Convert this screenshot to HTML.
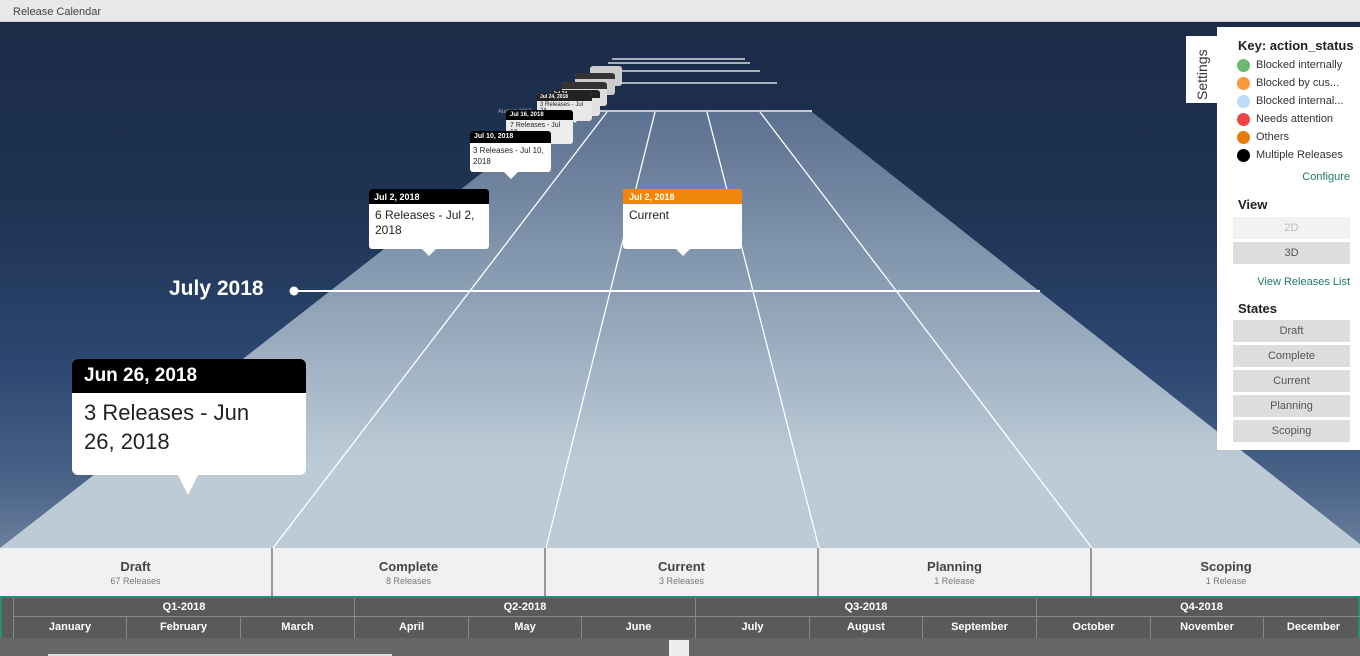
<!DOCTYPE html>
<html><head><meta charset="utf-8">
<style>
*{margin:0;padding:0;box-sizing:border-box}
body{width:1360px;height:656px;overflow:hidden;font-family:"Liberation Sans",sans-serif;background:#1d2d4b;position:relative}
#hdr{position:absolute;left:0;top:0;width:1360px;height:22px;background:#e8e8e8;border-bottom:1px solid #ccc;font-size:11px;color:#444;padding:6px 0 0 13px}
#sky{position:absolute;left:0;top:22px;width:1360px;height:526px;background:linear-gradient(180deg,#1b2b48 0%,#1f3353 35%,#2c4770 65%,#4b6488 88%,#6a7f9c 100%)}
.card{position:absolute;background:#fff;border-radius:3px;color:#222}
.card .h{background:#000;color:#fff;font-weight:bold;border-radius:3px 3px 0 0}
.card:after{content:"";position:absolute;left:50%;bottom:-7px;margin-left:-7px;border-left:7px solid transparent;border-right:7px solid transparent;border-top:7px solid #fff}
.card.big:after{bottom:-20px;border-left:10px solid transparent;border-right:10px solid transparent;border-top:20px solid #fff;left:188px;margin-left:-82px}
#panel{position:absolute;left:1217px;top:27px;width:143px;height:423px;background:#fff}
#tab{position:absolute;left:1186px;top:36px;width:32px;height:67px;background:#fff}
#tab span{position:absolute;left:-14px;top:26px;transform:rotate(-90deg);font-size:14px;color:#333;width:60px}
.k{font-size:11px;color:#333;height:18px;display:flex;align-items:center;padding-left:20px}
.k i{width:13px;height:13px;border-radius:50%;display:inline-block;margin-right:6px}
.btn{width:117px;margin-left:16px;height:22px;background:#ddd;color:#555;font-size:11px;text-align:center;line-height:22px;margin-bottom:3px}
.lane{position:absolute;top:548px;height:48px;background:#f1f1f1;text-align:center;border-right:2px solid #999}
.lane b{display:block;font-size:13px;color:#444;margin-top:11px;font-weight:bold}
.lane s{display:block;text-decoration:none;font-size:9px;color:#777;margin-top:2px}
#tl{position:absolute;left:0;top:596px;width:1360px;height:60px;background:#5a5a5a;border-top:2px solid #2a8a78;border-left:2px solid #2a8a78;border-right:2px solid #2a8a78}
.q,.m{position:absolute;color:#fff;font-size:11px;font-weight:bold;text-align:center;border-left:1px solid #888}
.q{top:0;height:19px;line-height:19px;border-bottom:1px solid #888}
.m{top:19px;height:21px;line-height:21px}
</style></head><body>
<div id="hdr">Release Calendar</div>
<div id="sky"></div>
<svg style="position:absolute;left:0;top:0" width="1360" height="656">
<defs><linearGradient id="rd" x1="0" y1="0" x2="0" y2="1">
<stop offset="0" stop-color="#5c7090"/><stop offset="0.4" stop-color="#8a9eb4"/><stop offset="0.8" stop-color="#bccbd6"/><stop offset="1" stop-color="#bccbd6"/></linearGradient></defs>
<polygon points="560,112 812,112 1365,548 0,548" fill="url(#rd)"/>
<g stroke="#fff" stroke-width="1.3" fill="none">
<line x1="607" y1="112" x2="273" y2="548"/>
<line x1="655" y1="112" x2="546" y2="548"/>
<line x1="707" y1="112" x2="819" y2="548"/>
<line x1="760" y1="112" x2="1092" y2="548"/>
<line x1="590" y1="111" x2="812" y2="111" stroke-width="1.5"/>
<line x1="600" y1="83" x2="777" y2="83"/>
<line x1="605" y1="71" x2="760" y2="71"/>
<line x1="608" y1="63" x2="750" y2="63"/>
<line x1="612" y1="59" x2="745" y2="59"/>
<line x1="294" y1="291" x2="1040" y2="291" stroke-width="2"/>
</g>
<circle cx="294" cy="291" r="4.5" fill="#fff"/>
<text x="169" y="295" fill="#fff" font-size="21" font-weight="bold" font-family="Liberation Sans">July 2018</text>
<text x="498" y="113" fill="#aab" font-size="6" font-family="Liberation Sans">August 2018</text>
</svg>
<div class="card" style="left:590px;top:66px;width:32px;height:20px;background:#ccc"></div>
<div class="card" style="left:575px;top:73px;width:40px;height:22px;background:#ccc"><div class="h" style="height:6px;background:#333"></div></div>
<div class="card" style="left:562px;top:82px;width:45px;height:24px;background:#ddd"><div class="h" style="height:7px;background:#333"></div></div>
<div class="card" style="left:550px;top:90px;width:50px;height:26px;background:#e2e2e2"><div class="h" style="font-size:5px;height:8px;padding:1px 3px;background:#222">Jul 24</div></div>
<div class="card" style="left:537px;top:93px;width:55px;height:28px;background:#e8e8e8"><div class="h" style="font-size:5px;height:8px;padding:1px 3px;background:#222">Jul 24, 2018</div><div style="font-size:6px;padding:1px 3px">3 Releases - Jul 24,</div></div>
<div class="card" style="left:506px;top:110px;width:67px;height:34px;background:#eee"><div class="h" style="font-size:6px;height:10px;padding:2px 4px">Jul 16, 2018</div><div style="font-size:7px;padding:2px 4px">7 Releases - Jul 16,</div></div>
<div class="card" style="left:470px;top:131px;width:81px;height:41px"><div class="h" style="font-size:7px;height:12px;padding:2px 4px">Jul 10, 2018</div><div style="font-size:8px;padding:2px 3px;line-height:11px">3 Releases - Jul 10, 2018</div></div>
<div class="card" style="left:369px;top:189px;width:120px;height:60px"><div class="h" style="font-size:9px;height:15px;padding:3px 5px">Jul 2, 2018</div><div style="font-size:12px;padding:4px 6px;line-height:15px">6 Releases - Jul 2, 2018</div></div>
<div class="card" style="left:623px;top:189px;width:119px;height:60px"><div class="h" style="font-size:9px;height:15px;padding:3px 6px;background:#f0860a">Jul 2, 2018</div><div style="font-size:12px;padding:4px 6px">Current</div></div>
<div class="card big" style="left:72px;top:359px;width:234px;height:116px;border-radius:6px"><div class="h" style="font-size:19px;height:34px;padding:6px 12px;border-radius:6px 6px 0 0">Jun 26, 2018</div><div style="font-size:22px;padding:5px 40px 0 12px;line-height:29px">3 Releases - Jun 26, 2018</div></div>
<div id="tab"><span>Settings</span></div>
<div id="panel">
<div style="font-size:13px;font-weight:bold;color:#222;padding:11px 0 3px 21px">Key: action_status</div>
<div class="k"><i style="background:#6cba72"></i>Blocked internally</div>
<div class="k"><i style="background:#f79a3a"></i>Blocked by cus...</div>
<div class="k"><i style="background:#bcdcf7"></i>Blocked internal...</div>
<div class="k"><i style="background:#ef4445"></i>Needs attention</div>
<div class="k"><i style="background:#e77b0c"></i>Others</div>
<div class="k"><i style="background:#000"></i>Multiple Releases</div>
<div style="font-size:11px;color:#1e7a6a;text-align:right;padding:7px 10px 0 0">Configure</div>
<div style="font-size:13px;font-weight:bold;color:#222;padding:14px 0 5px 21px">View</div>
<div class="btn" style="background:#f2f2f2;color:#bbb">2D</div>
<div class="btn">3D</div>
<div style="font-size:11px;color:#1e7a6a;text-align:right;padding:9px 10px 0 0">View Releases List</div>
<div style="font-size:13px;font-weight:bold;color:#222;padding:13px 0 4px 21px">States</div>
<div class="btn">Draft</div><div class="btn">Complete</div><div class="btn">Current</div><div class="btn">Planning</div><div class="btn">Scoping</div>
</div>
<div class="lane" style="left:0;width:273px"><b>Draft</b><s>67 Releases</s></div>
<div class="lane" style="left:273px;width:273px"><b>Complete</b><s>8 Releases</s></div>
<div class="lane" style="left:546px;width:273px"><b>Current</b><s>3 Releases</s></div>
<div class="lane" style="left:819px;width:273px"><b>Planning</b><s>1 Release</s></div>
<div class="lane" style="left:1092px;width:268px;border-right:none"><b>Scoping</b><s>1 Release</s></div>
<div id="tl">
<div class="q" style="left:11px;width:341px">Q1-2018</div>
<div class="q" style="left:352px;width:341px">Q2-2018</div>
<div class="q" style="left:693px;width:341px">Q3-2018</div>
<div class="q" style="left:1034px;width:330px">Q4-2018</div>
<div class="m" style="left:11px;width:113px">January</div>
<div class="m" style="left:124px;width:114px">February</div>
<div class="m" style="left:238px;width:114px">March</div>
<div class="m" style="left:352px;width:114px">April</div>
<div class="m" style="left:466px;width:113px">May</div>
<div class="m" style="left:579px;width:114px">June</div>
<div class="m" style="left:693px;width:114px">July</div>
<div class="m" style="left:807px;width:113px">August</div>
<div class="m" style="left:920px;width:114px">September</div>
<div class="m" style="left:1034px;width:114px">October</div>
<div class="m" style="left:1148px;width:113px">November</div>
<div class="m" style="left:1261px;width:100px">December</div>
<div style="position:absolute;left:-2px;top:40px;width:1362px;height:18px;background:#666"></div>
<div style="position:absolute;left:667px;top:42px;width:20px;height:16px;background:#eee"></div>
<div style="position:absolute;left:46px;top:56px;width:344px;height:2px;background:#ddd"></div>
</div>
</body></html>
